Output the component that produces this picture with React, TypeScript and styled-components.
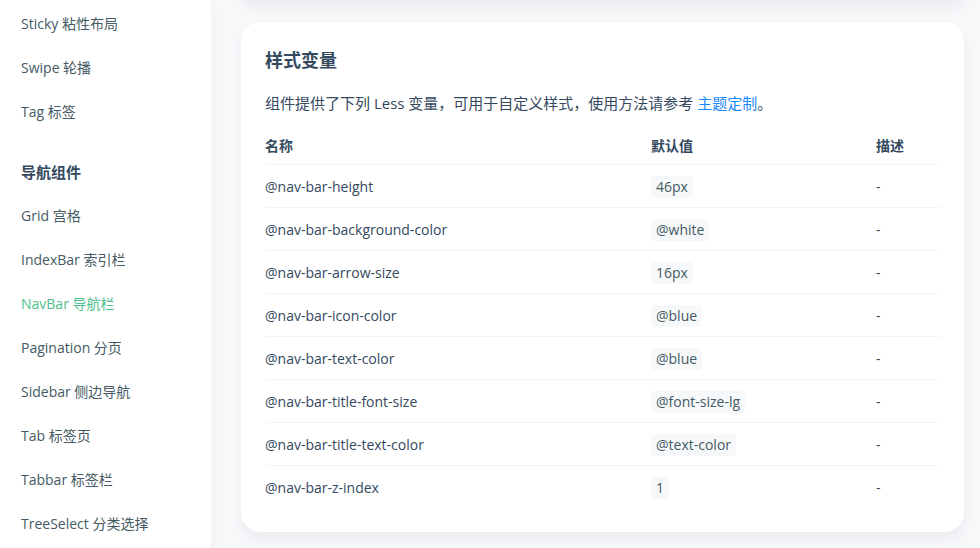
import React, { FC } from "react";
import styled, { createGlobalStyle } from "styled-components";

const textColor = "#34495e";
const navColor = "#455a64";
const green = "#4fc08d";
const blue = "#1989fa";

const GlobalStyle = createGlobalStyle`
  html, body {
    margin: 0;
    padding: 0;
    background: #f7f8fa;
    font-family: "Open Sans", "Noto Sans CJK SC", sans-serif;
    -webkit-font-smoothing: antialiased;
  }
`;

const Page = styled.div`
  display: flex;
  height: 548px;
  overflow: hidden;
`;

const Sidebar = styled.nav`
  width: 211px;
  flex-shrink: 0;
  background: #fff;
  box-shadow: 0 8px 12px #ebedf0;
  padding: 10px 0 0 21px;
  box-sizing: border-box;
  display: flex;
  flex-direction: column;
  gap: 16px;
`;

const NavItem = styled.a<{ $active?: boolean }>`
  display: block;
  font-size: 14px;
  line-height: 28px;
  color: ${(p) => (p.$active ? green : navColor)};
  text-decoration: none;
`;

const NavTitle = styled.div`
  padding-top: 16px;
  font-size: 15px;
  line-height: 28px;
  font-weight: 600;
  color: ${textColor};
`;

const Main = styled.main`
  flex: 1;
  display: flex;
  flex-direction: column;
  gap: 22px;
  padding: 0 16px 0 30px;
`;

const Card = styled.section<{ $stub?: boolean }>`
  background: #fff;
  border-radius: 20px;
  box-shadow: 0 8px 12px #ebedf0;
  padding: ${(p) => (p.$stub ? "0" : "24px")};
  height: ${(p) => (p.$stub ? "20px" : "auto")};
  margin-top: ${(p) => (p.$stub ? "-20px" : "0")};
  color: ${textColor};
`;

const Title = styled.h3`
  margin: 0;
  font-size: 18px;
  line-height: 28px;
  font-weight: 700;
`;

const Intro = styled.p`
  margin: 16px 0 12px;
  font-size: 15px;
  line-height: 26px;
`;

const Link = styled.a`
  color: ${blue};
  text-decoration: none;
`;

const Table = styled.table`
  width: 100%;
  border-collapse: collapse;
  font-size: 14px;
`;

const Th = styled.th`
  text-align: left;
  font-weight: 600;
  line-height: 20px;
  padding: 8px 0;
  border-bottom: 1px solid #f1f4f8;
`;

const Td = styled.td`
  line-height: 26px;
  padding: 9px 0 7px;
  border-bottom: 1px solid #f1f4f8;
`;

const Row = styled.tr`
  &:last-child ${Td} {
    border-bottom: none;
  }
`;

const Code = styled.code`
  display: inline-block;
  font-family: "Open Sans", "Noto Sans CJK SC", sans-serif;
  font-size: 14px;
  line-height: 22px;
  padding: 0 5px;
  border-radius: 4px;
  background: #f7f8fa;
  color: ${navColor};
`;

const navItems = ["Sticky 粘性布局", "Swipe 轮播", "Tag 标签"];

const navGroup = [
  "Grid 宫格",
  "IndexBar 索引栏",
  "NavBar 导航栏",
  "Pagination 分页",
  "Sidebar 侧边导航",
  "Tab 标签页",
  "Tabbar 标签栏",
  "TreeSelect 分类选择",
];

const variables: [string, string][] = [
  ["@nav-bar-height", "46px"],
  ["@nav-bar-background-color", "@white"],
  ["@nav-bar-arrow-size", "16px"],
  ["@nav-bar-icon-color", "@blue"],
  ["@nav-bar-text-color", "@blue"],
  ["@nav-bar-title-font-size", "@font-size-lg"],
  ["@nav-bar-title-text-color", "@text-color"],
  ["@nav-bar-z-index", "1"],
];

const App: FC = () => (
  <>
    <GlobalStyle />
    <Page>
      <Sidebar>
        {navItems.map((label) => (
          <NavItem key={label}>{label}</NavItem>
        ))}
        <NavTitle>导航组件</NavTitle>
        {navGroup.map((label) => (
          <NavItem key={label} $active={label.startsWith("NavBar")}>
            {label}
          </NavItem>
        ))}
      </Sidebar>
      <Main>
        <Card $stub />
        <Card>
          <Title>样式变量</Title>
          <Intro>
            组件提供了下列 Less 变量，可用于自定义样式，使用方法请参考{" "}
            <Link>主题定制</Link>。
          </Intro>
          <Table>
            <colgroup>
              <col style={{ width: 386 }} />
              <col style={{ width: 225 }} />
              <col />
            </colgroup>
            <thead>
              <tr>
                <Th>名称</Th>
                <Th>默认值</Th>
                <Th>描述</Th>
              </tr>
            </thead>
            <tbody>
              {variables.map(([name, value]) => (
                <Row key={name}>
                  <Td>{name}</Td>
                  <Td>
                    <Code>{value}</Code>
                  </Td>
                  <Td>-</Td>
                </Row>
              ))}
            </tbody>
          </Table>
        </Card>
      </Main>
    </Page>
  </>
);

export default App;
